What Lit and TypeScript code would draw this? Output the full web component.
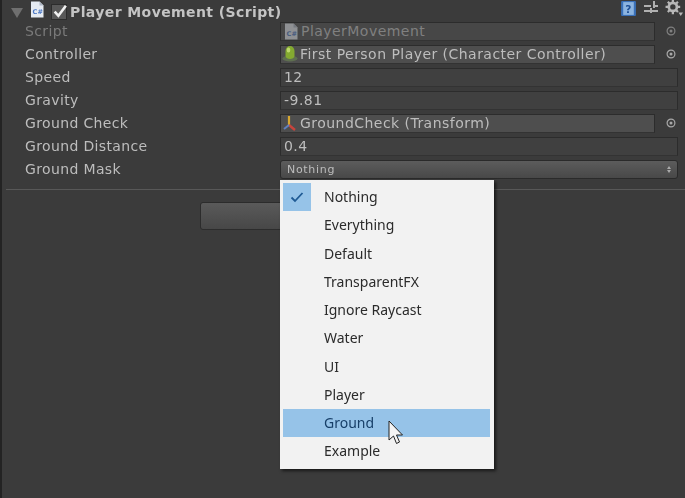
import { LitElement, html, css, svg } from "lit";
import { customElement } from "lit/decorators.js";

const scriptIcon = (cls: string) => html`<svg class=${cls} viewBox="0 0 14 17" width="14" height="17"><path d="M1 0.5H9.5L13.5 4.5V16.5H1Z" fill="#e6ebf2"/><path d="M9.5 .5V4.5H13.5Z" fill="#aeb6c4"/><text x="2.4" y="12.5" font-size="6.5" font-weight="700" font-family="DejaVu Sans" fill="#4c78c4">C#</text></svg>`;
const pawn = html`<svg class="obj-ico" viewBox="0 0 16 18" width="16" height="18"><ellipse cx="8" cy="13.500" rx="7.500" ry="3" fill="#5f6f50"/><path d="M3.500 6C3.500 3 5.500 1 8 1S12.500 3 12.500 6V11C12.500 13 10 14 8 14S3.500 13 3.500 11Z" fill="#84aa30"/><ellipse cx="6.500" cy="5" rx="1.800" ry="2.600" fill="#bcd86c"/></svg>`;
const axes = html`<svg class="obj-ico" viewBox="0 0 16 18" width="16" height="18"><path d="M7 11V2" stroke="#d8a830" stroke-width="2.200"/><path d="M7 11L13 16" stroke="#c8443c" stroke-width="2.400"/><path d="M7 11L2 15" stroke="#6080c0" stroke-width="2"/></svg>`;
const target = (dim = false) => html`<svg class="target ${dim ? "dim" : ""}" viewBox="0 0 10 10" width="10" height="10"><circle cx="5" cy="5" r="3.900" fill="none" stroke="currentColor" stroke-width="1.200"/><circle cx="5" cy="5" r="1.500" fill="currentColor"/></svg>`;

const layers = ["Nothing", "Everything", "Default", "TransparentFX", "Ignore Raycast", "Water", "UI", "Player", "Ground", "Example"];

@customElement("app-root")
export class AppRoot extends LitElement {
  static styles = css`
    :host { display: block; height: 498px; overflow: hidden; background: #3b3b3b; position: relative; font-family: "DejaVu Sans", sans-serif; color: #bdbdbd; font-size: 14px; letter-spacing: 0.36px; }
    .panel { height: 498px; box-sizing: border-box; border-left: 2px solid #232323; padding-left: 9px; display: flex; flex-direction: column; filter: blur(0.35px); }
    .header { height: 16px; padding-top: 3.5px; display: flex; align-items: center; position: relative; }
    .fold { width: 0; height: 0; border-left: 6px solid transparent; border-right: 6px solid transparent; border-top: 10px solid #6f6f6f; margin-right: 7px; margin-top: 2px; }
    .hdr-ico { margin-right: 7px; margin-top: -4px; }
    .check { width: 14px; height: 14px; background: #585858; border: 1px solid #2c2c2c; display: flex; margin-right: 3px; position: relative; }
    .check svg { position: absolute; left: 0; top: -2px; }
    .title { font-weight: 700; color: #c4c4c4; font-size: 14px; letter-spacing: 0.4px; }
    .hdr-tools { margin-left: auto; margin-right: 2px; display: flex; gap: 7px; align-items: center; margin-top: -7px; }
    .rows { display: flex; flex-direction: column; }
    .row { height: 23px; display: flex; align-items: center; }
    .label { width: 14px; }
    .name { width: 255px; }
    .dim { color: #7a7a7a; }
    .field { flex: 1; height: 19px; margin-right: 7px; box-sizing: border-box; background: #404040; border: 1px solid #2c2c2c; border-bottom-color: #333; display: flex; align-items: center; padding-left: 3px; color: #bdbdbd; white-space: nowrap; letter-spacing: 0.46px; }
    .obj { background: #4e4e4e; margin-right: 30px; padding-left: 1px; position: relative; }
    .obj.disabled { background: #474747; color: #808080; }
    .obj-ico { flex: none; margin: 0 2px 0 0; }
    .small-ico { flex: none; margin: 0 3px 0 2px; opacity: .45; }
    .target { position: absolute; right: -22px; top: 3px; color: #a8a8a8; }
    .target.dim { color: #808080; }
    .popup { flex: 1; height: 19px; margin-right: 7px; box-sizing: border-box; border: 1px solid #2a2a2a; border-radius: 3px; background: linear-gradient(#5c5c5c, #484848); color: #bdbdbd; font-size: 11px; padding: 0 6px; display: flex; align-items: center; justify-content: space-between; letter-spacing: 0.7px; }
    .updown { display: flex; flex-direction: column; gap: 1px; }
    .updown i { display: block; width: 0; height: 0; border-left: 2.500px solid transparent; border-right: 2.500px solid transparent; }
    .updown i:first-child { border-bottom: 3.500px solid #aaa; }
    .updown i:last-child { border-top: 3.500px solid #aaa; }
    .divider { height: 1px; background: #585858; margin: 8px 0 0 -5px; }
    .btn-row { padding: 12px 0 0 189px; }
    .btn { width: 200px; height: 28px; box-sizing: border-box; border-radius: 3px; background: linear-gradient(#5a5a5a, #474747); border: 1px solid #2c2c2c; }
    .menu { position: absolute; left: 280px; top: 180px; width: 214px; height: 289px; box-sizing: border-box; padding: 3px 4px 0 3px; background: #f2f2f2; box-shadow: 2px 2px 3px rgba(0,0,0,.6); font-family: "Noto Sans", sans-serif; font-size: 14px; letter-spacing: 0; color: #2b2b2b; display: flex; flex-direction: column; filter: blur(0.3px); }
    .item { height: 28.250px; flex: none; display: flex; align-items: center; position: relative; }
    .item.hover { background: #96c3e8; color: #173f68; }
    .tick { width: 28px; height: 28px; background: #96c3e8; display: flex; align-items: center; justify-content: center; position: absolute; left: 0; top: 0; }
    .item span { margin-left: 41px; margin-top: -1px; }
    .cursor { position: absolute; left: 388px; top: 420px; }
  `;

  private row(name: string, field: unknown, cls = "") {
    return html`<div class="row"><div class="label"></div><div class="name ${cls}">${name}</div>${field}</div>`;
  }

  render() {
    return html`
      <div class="panel">
        <div class="header">
          <div class="fold"></div>
          ${scriptIcon("hdr-ico")}
          <div class="check"><svg viewBox="0 0 15 15" width="16" height="16"><path d="M2.500 8L6 12L13 2.500" fill="none" stroke="#f0f0f0" stroke-width="2.400"/></svg></div>
          <div class="title">Player Movement (Script)</div>
          <div class="hdr-tools">
            <svg viewBox="0 0 16 16" width="17" height="17"><rect x="1" y="1" width="14" height="14" rx="1" fill="#3a70b8"/><rect x="3" y="2" width="10" height="12" fill="#8cb4e0"/><text x="5" y="12" font-size="10" font-weight="700" font-family="DejaVu Sans" fill="#1f4f94">?</text></svg>
            <svg viewBox="0 0 14 16" width="14" height="16"><path d="M0 6H7M0 11H6M9 6H14M8 11H14" stroke="#b0b0b0" stroke-width="2"/><path d="M10 1V8M7 8V13" stroke="#b0b0b0" stroke-width="2"/></svg>
            <svg viewBox="0 0 16 16" width="18" height="18"><circle cx="7" cy="7" r="3.600" fill="none" stroke="#b8b8b8" stroke-width="2.400"/><path d="M7 0.500V3M7 11V13.500M.5 7H3M11 7H13.500M2.500 2.500L4 4M10 10L11.500 11.500M11.500 2.500L10 4M4 10L2.500 11.500" stroke="#b8b8b8" stroke-width="2"/><path d="M12 12H16L14 15Z" fill="#b8b8b8"/></svg>
          </div>
        </div>
        <div class="rows">
          ${this.row("Script", html`<div class="field obj disabled">${scriptIcon("small-ico")}PlayerMovement${target(true)}</div>`, "dim")}
          ${this.row("Controller", html`<div class="field obj">${pawn}First Person Player (Character Controller)${target()}</div>`)}
          ${this.row("Speed", html`<div class="field">12</div>`)}
          ${this.row("Gravity", html`<div class="field">-9.81</div>`)}
          ${this.row("Ground Check", html`<div class="field obj">${axes}GroundCheck (Transform)${target()}</div>`)}
          ${this.row("Ground Distance", html`<div class="field">0.4</div>`)}
          ${this.row("Ground Mask", html`<div class="popup">Nothing<div class="updown"><i></i><i></i></div></div>`)}
        </div>
        <div class="divider"></div>
        <div class="btn-row"><div class="btn"></div></div>
      </div>
      <div class="menu">
        ${layers.map((l, i) => html`<div class="item ${l === "Ground" ? "hover" : ""}">
          ${i === 0 ? html`<div class="tick"><svg viewBox="0 0 14 12" width="14" height="12"><path d="M1.500 6.500L5 10L12.500 2" fill="none" stroke="#1f5a94" stroke-width="1.800"/></svg></div>` : ""}
          <span>${l}</span></div>`)}
      </div>
      <svg class="cursor" viewBox="0 0 17 26" width="17" height="26">${svg`<path d="M1 1V20L5.500 16L8.500 23.500L11.500 22L8.500 15H14.500Z" fill="#f4f4f4" stroke="#222" stroke-width="1"/>`}</svg>
    `;
  }
}
